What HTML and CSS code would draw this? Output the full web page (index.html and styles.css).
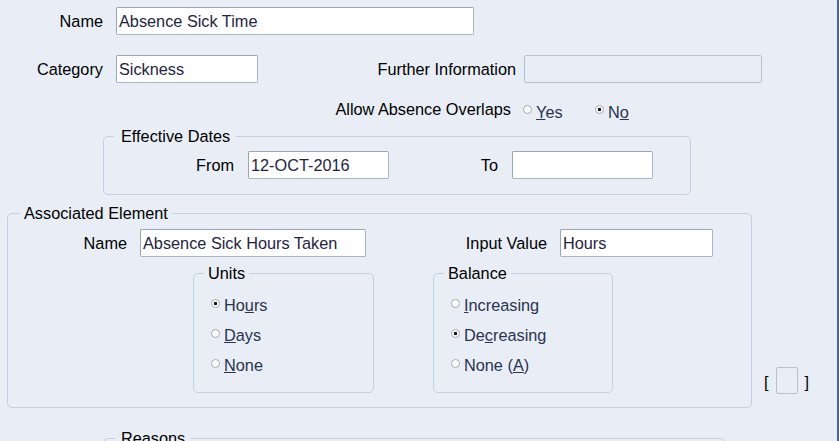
FILE: index.html
```html
<!DOCTYPE html>
<html lang="en">
<head>
<meta charset="utf-8">
<title>Absence Attendance Type</title>
<link rel="stylesheet" href="styles.css">
</head>
<body>
<div class="canvas">
  <div class="row r1">
    <label class="lbl w103">Name</label>
    <input class="field w358" type="text" value="Absence Sick Time">
  </div>
  <div class="row r2">
    <label class="lbl w103">Category</label>
    <input class="field w142" type="text" value="Sickness">
    <label class="lbl w258 gap8">Further Information</label>
    <input class="field w238 off" type="text" value="" disabled>
  </div>
  <div class="row r3">
    <span class="lbl w511 gap12">Allow Absence Overlaps</span>
    <span class="opt w72"><span class="radio"></span><span><u>Y</u>es</span></span>
    <span class="opt"><span class="radio on"></span><span>N<u>o</u></span></span>
  </div>

  <fieldset class="box eff">
    <legend>Effective Dates</legend>
    <div class="row inrow">
      <label class="lbl w130 gap14">From</label>
      <input class="field w141" type="text" value="12-OCT-2016">
      <label class="lbl w109 gap14">To</label>
      <input class="field w141" type="text" value="">
    </div>
  </fieldset>

  <div class="assoc-row">
    <fieldset class="box assoc">
      <legend>Associated Element</legend>
      <div class="row nrow">
        <label class="lbl w119">Name</label>
        <input class="field w226" type="text" value="Absence Sick Hours Taken">
        <label class="lbl w181">Input Value</label>
        <input class="field w153" type="text" value="Hours">
      </div>
      <div class="groups">
        <fieldset class="box grp units">
          <legend>Units</legend>
          <div class="opts">
            <span class="opt"><span class="radio on"></span><span>Ho<u>u</u>rs</span></span>
            <span class="opt"><span class="radio"></span><span><u>D</u>ays</span></span>
            <span class="opt"><span class="radio"></span><span><u>N</u>one</span></span>
          </div>
        </fieldset>
        <fieldset class="box grp balance">
          <legend>Balance</legend>
          <div class="opts">
            <span class="opt"><span class="radio"></span><span><u>I</u>ncreasing</span></span>
            <span class="opt"><span class="radio on"></span><span>De<u>c</u>reasing</span></span>
            <span class="opt"><span class="radio"></span><span>None (<u>A</u>)</span></span>
          </div>
        </fieldset>
      </div>
    </fieldset>
    <div class="brk">
      <span class="bracket">[</span>
      <span class="flexbox"></span>
      <span class="bracket">]</span>
    </div>
  </div>

  <fieldset class="box reasons">
    <legend>Reasons</legend>
  </fieldset>
</div>
</body>
</html>
```

FILE: styles.css
```css
html, body {
  margin: 0;
  padding: 0;
}

body {
  background: #e9eef6;
  font-family: "Liberation Sans", Arial, sans-serif;
  font-size: 16.3px;
  line-height: 18px;
  color: #000;
}

.canvas {
  width: 837px;
  height: 441px;
  border-right: 2px solid #4d6391;
  overflow: hidden;
}

.row {
  display: flex;
  align-items: center;
  height: 28px;
}

.lbl {
  flex: none;
  text-align: right;
  white-space: nowrap;
  margin-right: 13px;
  color: #000;
}

.gap8 { margin-right: 8px; }
.gap12 { margin-right: 12px; }
.gap14 { margin-right: 14px; }

.w72 { width: 72px; }
.w103 { width: 103px; }
.w109 { width: 109px; }
.w119 { width: 119px; }
.w130 { width: 130px; }
.w141 { width: 141px; }
.w142 { width: 142px; }
.w153 { width: 153px; }
.w181 { width: 181px; }
.w226 { width: 226px; }
.w238 { width: 238px; }
.w258 { width: 258px; }
.w358 { width: 358px; }
.w511 { width: 511px; }

.field {
  flex: none;
  height: 28px;
  box-sizing: border-box;
  margin: 0;
  padding: 0 2px;
  border: 1px solid #aab5c4;
  border-top-color: #9aa5b5;
  border-left-color: #9aa5b5;
  border-radius: 2px;
  background: #fff;
  font-family: inherit;
  font-size: 16.3px;
  color: #1f2540;
  outline: none;
}

.field.off {
  background: #e9eef6;
  border-color: #b7c2d0;
}

.r1 { margin-top: 7px; }
.r2 { margin-top: 20px; }
.r3 {
  margin-top: 17px;
  height: 18px;
}

.opt {
  flex: none;
  display: flex;
  align-items: center;
  height: 18px;
  color: #2a3350;
  white-space: nowrap;
}

.r3 .opt {
  margin-top: 5px;
}

.radio {
  flex: none;
  width: 9px;
  height: 9px;
  box-sizing: border-box;
  border: 1px solid #a3a9b2;
  border-radius: 50%;
  background: #fff;
  margin-right: 4px;
  margin-bottom: 4px;
}

.radio.on {
  background: radial-gradient(circle, #1c1c1c 0, #1c1c1c 1.4px, #fff 2.1px);
}

.box {
  box-sizing: border-box;
  margin: 0;
  padding: 0;
  min-width: 0;
  border: 1px solid #c3d0e2;
  border-radius: 5px;
}

.box legend {
  line-height: 18px;
  padding: 0 6px;
  color: #000;
}

.eff {
  margin: 9px 0 0 103px;
  width: 588px;
  padding-bottom: 15px;
}

.eff legend {
  margin-left: 10px;
  padding: 0 6px 0 7px;
}

.inrow { margin-top: 6px; }

.assoc-row {
  display: flex;
  align-items: flex-end;
  margin-top: 9px;
}

.assoc {
  flex: none;
  margin-left: 7px;
  width: 745px;
  padding-bottom: 14px;
}

.assoc legend {
  margin-left: 12px;
  padding: 0 4px;
}

.nrow { margin-top: 7px; }

.groups {
  display: flex;
  margin-top: 7px;
  margin-left: 185px;
}

.grp {
  flex: none;
  padding-bottom: 18px;
}

.grp legend { margin-left: 10px; }

.units { width: 181px; }

.balance {
  width: 180px;
  margin-left: 59px;
}

.opts {
  display: flex;
  flex-direction: column;
  gap: 12px;
  padding-top: 14px;
  padding-left: 17px;
}

.brk {
  flex: none;
  display: flex;
  align-items: flex-end;
  margin-left: 12px;
  margin-bottom: 14px;
}

.bracket {
  line-height: 18px;
  margin-bottom: 3px;
  color: #000;
}

.flexbox {
  width: 22px;
  height: 27px;
  box-sizing: border-box;
  border: 1px solid #b7c2d0;
  border-radius: 2px;
  margin: 0 7px 0 7px;
}

.reasons {
  margin: 21px 0 0 103px;
  width: 623px;
  height: 80px;
}

.reasons legend {
  margin-left: 11px;
}
```
